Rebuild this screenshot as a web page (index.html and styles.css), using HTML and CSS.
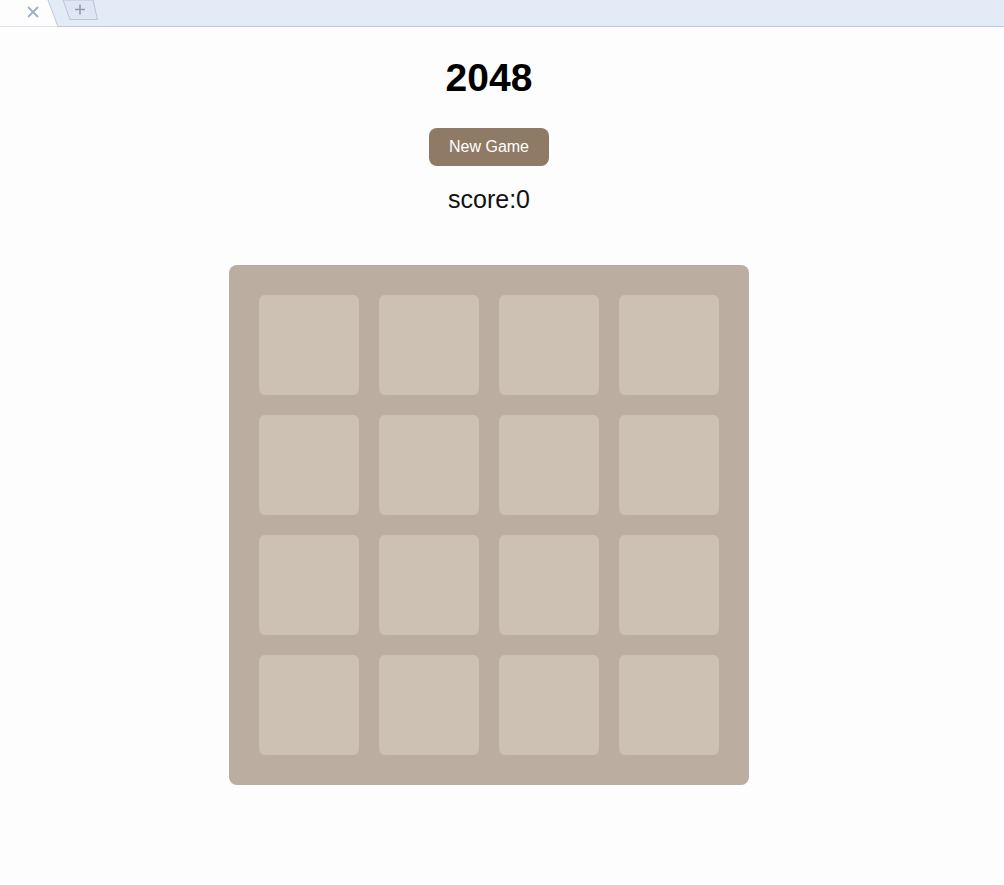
FILE: index.html
```html
<!DOCTYPE html>
<html lang="en">
<head>
<meta charset="utf-8">
<title>2048</title>
<link rel="stylesheet" href="styles.css">
</head>
<body>
  <div class="tabstrip">
    <svg class="tabs" width="110" height="27" viewBox="0 0 110 27">
      <!-- active tab with slanted right edge -->
      <path d="M0 0 H48 L58 26.5 H0 Z" fill="#fdfdfe"/>
      <path d="M48 0 L58 26.5" stroke="#bac8d8" stroke-width="1" fill="none"/>
      <!-- close cross -->
      <path d="M28 7 L38 17 M38 7 L28 17" stroke="#a0afc1" stroke-width="1.8" fill="none"/>
      <!-- new tab button -->
      <path d="M63 0 H93 L97.5 19.5 H70 Z" fill="#dde6f2" stroke="#b7c6d8" stroke-width="1"/>
      <path d="M80 4.5 V14.5 M75 9.5 H85" stroke="#8d9db1" stroke-width="1.6" fill="none"/>
    </svg>
  </div>
  <main class="game">
    <h1 class="title">2048</h1>
    <button class="new-game" type="button">New Game</button>
    <p class="score">score:<span class="score-value">0</span></p>
    <div class="board">
      <div class="cell"></div><div class="cell"></div><div class="cell"></div><div class="cell"></div>
      <div class="cell"></div><div class="cell"></div><div class="cell"></div><div class="cell"></div>
      <div class="cell"></div><div class="cell"></div><div class="cell"></div><div class="cell"></div>
      <div class="cell"></div><div class="cell"></div><div class="cell"></div><div class="cell"></div>
    </div>
  </main>
</body>
</html>
```

FILE: styles.css
```css
html, body {
  margin: 0;
  padding: 0;
}

body {
  background: #fdfdfd;
  font-family: "Liberation Sans", Arial, sans-serif;
  color: #000;
}

.tabstrip {
  height: 26px;
  background: #e3ebf6;
  border-bottom: 1px solid #bccadb;
  display: flex;
  align-items: flex-start;
}

.tabs {
  display: block;
}

.game {
  width: 978px;
  display: flex;
  flex-direction: column;
  align-items: center;
}

.title {
  margin: 31px 0 0;
  font-size: 39px;
  line-height: 40px;
  font-weight: bold;
  color: #000;
}

.new-game {
  margin-top: 30px;
  width: 120px;
  height: 38px;
  border: none;
  border-radius: 8px;
  background: #8f7a66;
  color: #fff;
  font-family: "Liberation Sans", Arial, sans-serif;
  font-size: 16px;
  padding: 0;
  cursor: pointer;
}

.score {
  margin: 21px 0 0;
  font-size: 25px;
  line-height: 25px;
  color: #111;
}

.board {
  margin-top: 53px;
  width: 520px;
  height: 520px;
  box-sizing: border-box;
  padding: 30px;
  background: #bbada0;
  border-radius: 8px;
  display: grid;
  grid-template-columns: repeat(4, 100px);
  grid-template-rows: repeat(4, 100px);
  gap: 20px;
}

.cell {
  background: #cdc1b4;
  border-radius: 6px;
}
```
